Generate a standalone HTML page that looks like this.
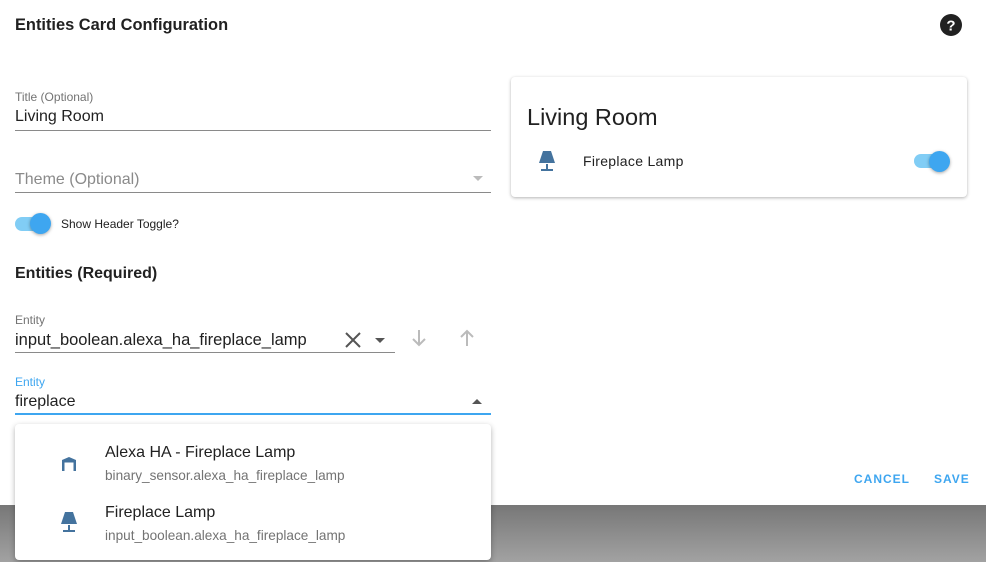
<!DOCTYPE html>
<html><head><meta charset="utf-8"><style>
*{margin:0;padding:0;box-sizing:border-box}
body{width:986px;height:562px;overflow:hidden;font-family:"Liberation Sans",Arial,sans-serif;background:#fff;position:relative;color:#212121}
.a{position:absolute;white-space:nowrap}
.bg{position:absolute;left:0;top:505px;width:986px;height:57px;background:linear-gradient(#777,#a2a2a2)}
.line{position:absolute;height:1px;background:#8a8a8a}
.lbl{font-size:12px;color:#737373}
.inp{font-size:16px;color:#212121}
</style></head><body>
<div class="bg"></div>
<div class="a" style="left:15px;top:16px;font-size:16.4px;font-weight:bold;color:#212121">Entities Card Configuration</div>
<svg class="a" style="left:939px;top:13px" width="24" height="24" viewBox="0 0 24 24"><circle cx="12" cy="12" r="11" fill="#212121"/><text x="12" y="17.5" font-size="15" font-weight="bold" text-anchor="middle" fill="#fff" font-family="Liberation Sans">?</text></svg>

<div class="a lbl" style="left:15px;top:90px">Title (Optional)</div>
<div class="a inp" style="left:15px;top:108px">Living Room</div>
<div class="line" style="left:15px;top:130px;width:476px"></div>

<div class="a inp" style="left:15px;top:171px;color:#8a8a8a">Theme (Optional)</div>
<svg class="a" style="left:472px;top:174px" width="12" height="8"><path d="M1 2h10L6 7z" fill="#bbb"/></svg>
<div class="line" style="left:15px;top:192px;width:476px"></div>

<div class="a" style="left:15px;top:217px;width:34px;height:14px;border-radius:7px;background:#81cdf5"></div>
<div class="a" style="left:30px;top:213px;width:21px;height:21px;border-radius:50%;background:#3ea6f0;box-shadow:0 1px 3px rgba(0,0,0,.35)"></div>
<div class="a" style="left:61px;top:217px;font-size:12px;color:#212121">Show Header Toggle?</div>

<div class="a" style="left:15px;top:265px;font-size:16px;font-weight:bold">Entities (Required)</div>

<div class="a lbl" style="left:15px;top:313px">Entity</div>
<div class="a inp" style="left:15px;top:331px;font-size:16.5px">input_boolean.alexa_ha_fireplace_lamp</div>
<svg class="a" style="left:344px;top:331px" width="18" height="18"><path d="M2 2L16 16M16 2L2 16" stroke="#555" stroke-width="2"/></svg>
<svg class="a" style="left:374px;top:336px" width="12" height="8"><path d="M1 2h10L6 7z" fill="#555"/></svg>
<div class="line" style="left:15px;top:352px;width:380px"></div>
<svg class="a" style="left:409px;top:328px" width="20" height="20"><path d="M10 2V17M4 11l6 6 6-6" stroke="#bbb" stroke-width="2" fill="none"/></svg>
<svg class="a" style="left:457px;top:328px" width="20" height="20"><path d="M10 18V3M4 9l6-6 6 6" stroke="#bbb" stroke-width="2" fill="none"/></svg>

<div class="a lbl" style="left:15px;top:375px;color:#3ea6f0">Entity</div>
<div class="a inp" style="left:15px;top:393px">fireplace</div>
<svg class="a" style="left:471px;top:398px" width="12" height="8"><path d="M1 6h10L6 1z" fill="#555"/></svg>
<div class="a" style="left:15px;top:413px;width:476px;height:2px;background:#3ea6f0"></div>

<div class="a" style="left:511px;top:77px;width:456px;height:120px;background:#fff;border-radius:4px;box-shadow:0 1px 3px rgba(0,0,0,.3)"></div>
<div class="a" style="left:527px;top:104px;font-size:23.5px;color:#212121">Living Room</div>
<svg class="a" style="left:535px;top:149px" width="24" height="24" viewBox="0 0 24 24"><path d="M8 2H16L20 14H4L8 2M11 15H13V20H18V22H6V20H11V15Z" fill="#44739e"/></svg>
<div class="a" style="left:583px;top:153px;font-size:14px;letter-spacing:.3px">Fireplace Lamp</div>
<div class="a" style="left:914px;top:154px;width:34px;height:14px;border-radius:7px;background:#81cdf5"></div>
<div class="a" style="left:929px;top:151px;width:21px;height:21px;border-radius:50%;background:#3ea6f0;box-shadow:0 1px 3px rgba(0,0,0,.35)"></div>

<div class="a" style="left:854px;top:472px;font-size:12px;font-weight:bold;color:#3ea6f0;letter-spacing:1px">CANCEL</div>
<div class="a" style="left:934px;top:472px;font-size:12px;font-weight:bold;color:#3ea6f0;letter-spacing:1px">SAVE</div>

<div class="a" style="left:15px;top:424px;width:476px;height:136px;background:#fff;border-radius:4px;box-shadow:0 2px 6px rgba(0,0,0,.3)"></div>
<svg class="a" style="left:60px;top:455px" width="18" height="18" viewBox="0 0 18 18"><path d="M2 16V5L9 2L16 5V16H13.5V7.5H4.5V16Z" fill="#44739e"/></svg>
<div class="a" style="left:105px;top:444px;font-size:16px">Alexa HA - Fireplace Lamp</div>
<div class="a" style="left:105px;top:468px;font-size:13.6px;color:#737373">binary_sensor.alexa_ha_fireplace_lamp</div>
<svg class="a" style="left:57px;top:510px" width="24" height="24" viewBox="0 0 24 24"><path d="M8 2H16L20 14H4L8 2M11 15H13V20H18V22H6V20H11V15Z" fill="#44739e"/></svg>
<div class="a" style="left:105px;top:504px;font-size:16px">Fireplace Lamp</div>
<div class="a" style="left:105px;top:528px;font-size:13.6px;color:#737373">input_boolean.alexa_ha_fireplace_lamp</div>
</body></html>
